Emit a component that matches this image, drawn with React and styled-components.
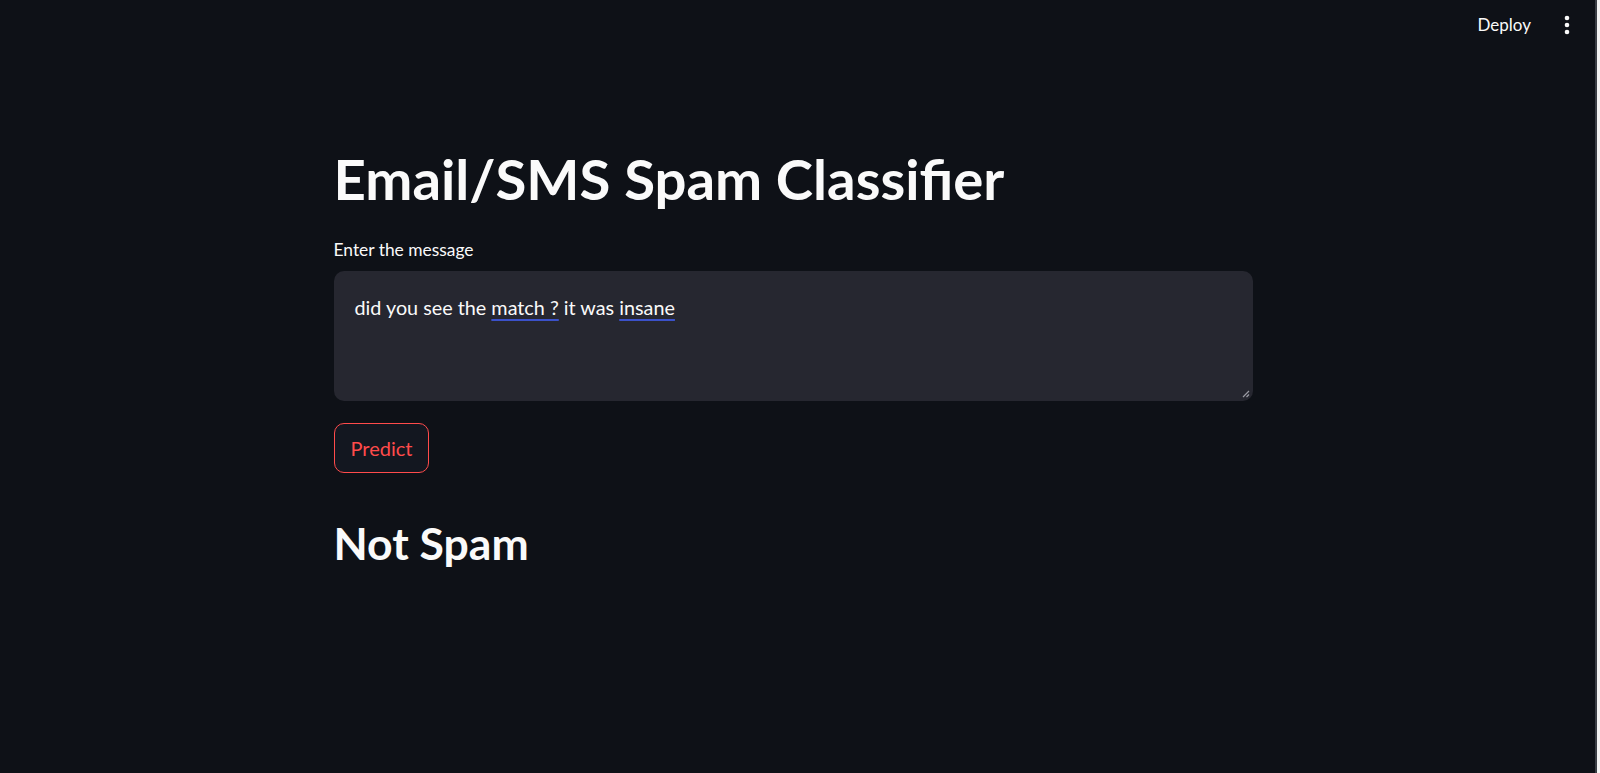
import React from "react";
import styled, { createGlobalStyle } from "styled-components";

const GlobalStyle = createGlobalStyle`
  html, body {
    margin: 0;
    padding: 0;
    height: 100%;
    background: #f3f3f3;
  }
  body {
    font-family: Lato, "Noto Sans", sans-serif;
    overflow: hidden;
  }
  #root {
    height: 100%;
  }
`;

const Frame = styled.div`
  display: flex;
  height: 100vh;
`;

const Page = styled.div`
  flex: 1;
  display: flex;
  flex-direction: column;
  background: #0e1117;
  color: #fafafa;
  border-right: 2px solid #3b3e45;
`;

const Edge = styled.div`
  width: 3px;
  background: #f3f3f3;
`;

const Header = styled.header`
  height: 49px;
  display: flex;
  align-items: center;
  justify-content: flex-end;
  padding-right: 25px;
  gap: 33px;
`;

const DeployButton = styled.button`
  background: none;
  border: none;
  padding: 0;
  color: #fafafa;
  font-family: inherit;
  font-size: 17px;
  cursor: pointer;
`;

const MenuButton = styled.button`
  background: none;
  border: none;
  padding: 0;
  display: flex;
  color: #fafafa;
  cursor: pointer;
`;

const Block = styled.main`
  width: 919px;
  margin-left: calc(50% - 464px);
  padding-top: 97px;
  display: flex;
  flex-direction: column;
  align-items: flex-start;
`;

const Title = styled.h1`
  margin: 0;
  font-size: 56.3px;
  line-height: 65px;
  font-weight: 700;
`;

const Label = styled.label`
  margin-top: 27px;
  font-size: 17.4px;
  line-height: 24px;
`;

const TextBox = styled.div`
  position: relative;
  margin-top: 9px;
  width: 100%;
  height: 130px;
  box-sizing: border-box;
  padding: 21px;
  background: #262730;
  border-radius: 10px;
  font-size: 19.8px;
  line-height: 30px;
  color: #fafafa;
`;

const Flagged = styled.span`
  text-decoration: underline;
  text-decoration-color: #3b51c9;
  text-decoration-thickness: 2px;
  text-underline-offset: 4px;
`;

const Grip = styled.svg`
  position: absolute;
  right: 3px;
  bottom: 3px;
`;

const PredictButton = styled.button`
  margin-top: 22px;
  height: 50px;
  padding: 0 16px;
  background: #131720;
  border: 1px solid #ff4b4b;
  border-radius: 10px;
  color: #ff4b4b;
  font-family: inherit;
  font-size: 20px;
  cursor: pointer;
`;

const Result = styled.h2`
  margin: 42px 0 0;
  font-size: 44.5px;
  line-height: 55px;
  font-weight: 700;
`;

export default function App() {
  return (
    <>
      <GlobalStyle />
      <Frame>
        <Page>
          <Header>
            <DeployButton>Deploy</DeployButton>
            <MenuButton aria-label="menu">
              <svg width="6" height="20" viewBox="0 0 6 20">
                <circle cx="3" cy="3" r="2.3" fill="#fafafa" />
                <circle cx="3" cy="10" r="2.3" fill="#fafafa" />
                <circle cx="3" cy="17" r="2.3" fill="#fafafa" />
              </svg>
            </MenuButton>
          </Header>
          <Block>
            <Title>Email/SMS Spam Classifier</Title>
            <Label>Enter the message</Label>
            <TextBox>
              did you see the <Flagged>match ?</Flagged> it was{" "}
              <Flagged>insane</Flagged>
              <Grip width="8" height="8" viewBox="0 0 8 8">
                <path d="M7 1L1 7M7 4.5L4.5 7" stroke="#9a9ba3" strokeWidth="1.2" />
              </Grip>
            </TextBox>
            <PredictButton>Predict</PredictButton>
            <Result>Not Spam</Result>
          </Block>
        </Page>
        <Edge />
      </Frame>
    </>
  );
}
